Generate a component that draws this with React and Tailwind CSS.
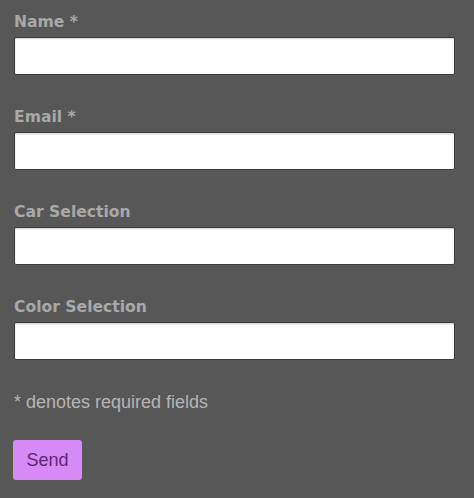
export default function App() {
  const fields = [
    { id: "name", label: "Name *" },
    { id: "email", label: "Email *" },
    { id: "car", label: "Car Selection" },
    { id: "color", label: "Color Selection" },
  ];

  return (
    <div className="min-h-[498px] w-full bg-[#575757] pl-[14px] pr-[19px] pt-[12px]">
      <form onSubmit={(e) => e.preventDefault()}>
        {fields.map((f) => (
          <div key={f.id} className="mb-[32px]">
            <label
              htmlFor={f.id}
              className="block h-[25px] font-['DejaVu_Sans',sans-serif] text-[15.6px] font-bold leading-[20px] text-[#a8a8a8]"
            >
              {f.label}
            </label>
            <input
              id={f.id}
              type="text"
              className="block h-[38px] w-full rounded-[2px] border border-[#3c3c3c] bg-white shadow-[inset_0_1px_2px_rgba(0,0,0,0.2)] outline-none"
            />
          </div>
        ))}
        <p className="-mt-px font-['Liberation_Sans',sans-serif] text-[18px] leading-[22px] text-[#b4b4b4]">
          * denotes required fields
        </p>
        <button
          type="submit"
          className="mt-[27px] -ml-px h-[40px] w-[69px] rounded-[3px] bg-[#d68af6] font-['Liberation_Sans',sans-serif] text-[18px] text-[#5b2a72]"
        >
          Send
        </button>
      </form>
    </div>
  );
}
